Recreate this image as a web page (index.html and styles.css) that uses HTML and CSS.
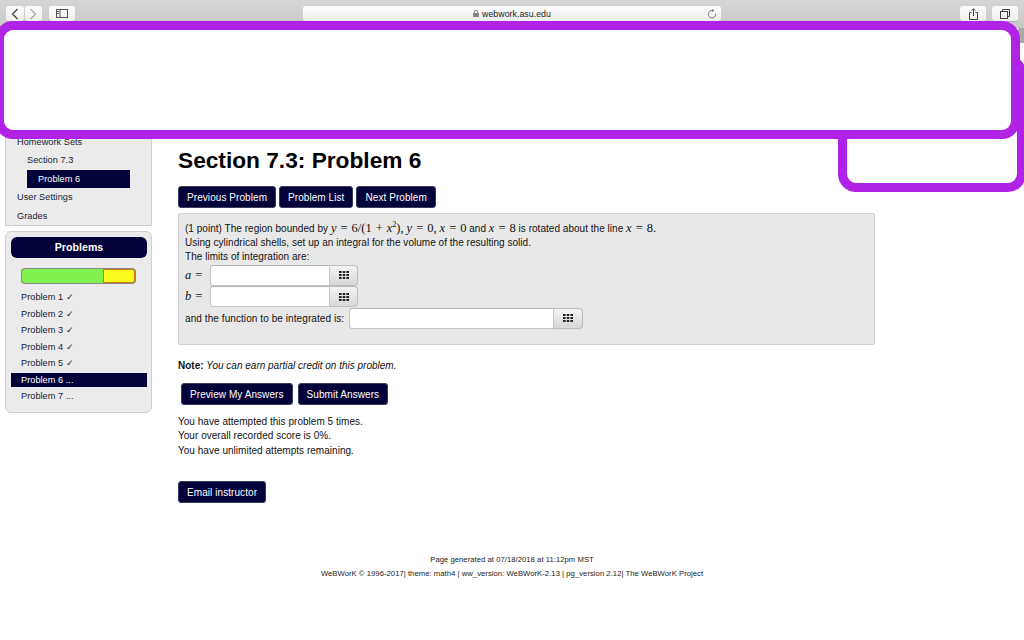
FILE: index.html
```html
<!DOCTYPE html>
<html lang="en">
<head>
<meta charset="utf-8">
<title>WeBWorK</title>
<link rel="stylesheet" href="styles.css">
</head>
<body>
<header class="toolbar">
  <div class="tool-left">
    <div class="nav-pair">
      <span class="tool-btn nav-btn"><svg width="8" height="12" viewBox="0 0 8 12"><path d="M6.500 1 1.500 6l5 5" fill="none" stroke="#444" stroke-width="1.300"/></svg></span>
      <span class="tool-btn nav-btn"><svg width="8" height="12" viewBox="0 0 8 12"><path d="M1.500 1l5 5-5 5" fill="none" stroke="#aaa" stroke-width="1.300"/></svg></span>
    </div>
    <span class="tool-btn side-btn"><svg width="12" height="10" viewBox="0 0 12 10"><rect x=".5" y=".5" width="11" height="8" fill="none" stroke="#555"/><path d="M4 .5v8M1 2.500h2M1 4.500h2" stroke="#555" fill="none"/></svg></span>
  </div>
  <div class="address">
    <svg class="lock" width="6" height="7" viewBox="0 0 6 7"><path d="M1.300 3V2a1.700 1.700 0 0 1 3.400 0v1" fill="none" stroke="#888"/><rect y="3" width="6" height="4" fill="#888"/></svg>
    <span>webwork.asu.edu</span>
    <svg class="reload" width="10" height="10" viewBox="0 0 10 10"><path d="M5.500 1.500A3.700 3.700 0 1 0 8.700 5" fill="none" stroke="#777"/><path d="M5 0l2.400 1.500L5 3z" fill="#777"/></svg>
  </div>
  <div class="tool-right">
    <span class="tool-btn right-btn"><svg width="9" height="12" viewBox="0 0 9 12"><path d="M2.500 4.500H.5v7h8v-7h-2M4.500 8V1M2.700 2.500 4.500.7l1.800 1.800" fill="none" stroke="#444"/></svg></span>
    <span class="tool-btn right-btn"><svg width="10" height="10" viewBox="0 0 10 10"><rect x=".5" y="2.500" width="7" height="7" fill="none" stroke="#444"/><path d="M2.500 2.500v-2h7v7h-2" fill="none" stroke="#444"/></svg></span>
  </div>
</header>

<div class="page">
  <aside class="sidebar">
    <nav class="panel site-nav">
      <a class="nav-top">Homework Sets</a>
      <a class="nav-sub">Section 7.3</a>
      <a class="nav-sub nav-active">Problem 6</a>
      <a class="nav-top">User Settings</a>
      <a class="nav-top">Grades</a>
    </nav>
    <nav class="panel problems">
      <h2 class="panel-title">Problems</h2>
      <div class="progress"><div class="progress-good"></div><div class="progress-part"></div></div>
      <ul class="problem-list">
        <li>Problem 1 ✓</li>
        <li>Problem 2 ✓</li>
        <li>Problem 3 ✓</li>
        <li>Problem 4 ✓</li>
        <li>Problem 5 ✓</li>
        <li class="current">Problem 6 ...</li>
        <li>Problem 7 ...</li>
      </ul>
    </nav>
  </aside>

  <main class="content">
    <h1 class="title">Section 7.3: Problem 6</h1>
    <div class="btn-row">
      <a class="btn">Previous Problem</a>
      <a class="btn">Problem List</a>
      <a class="btn">Next Problem</a>
    </div>
    <section class="problem">
      <p class="line">(1 point) The region bounded by <span class="math"><i>y</i><span class="op">=</span>6/(1<span class="op">+</span><i>x</i><sup>2</sup>),<span class="sep"></span><i>y</i><span class="op">=</span>0,<span class="sep"></span><i>x</i><span class="op">=</span>0</span> and <span class="math"><i>x</i><span class="op">=</span>8</span> is rotated about the line <span class="math"><i>x</i><span class="op">=</span>8.</span></p>
      <p class="line">Using cylindrical shells, set up an integral for the volume of the resulting solid.</p>
      <p class="line">The limits of integration are:</p>
      <div class="answer">
        <span class="math ans-label"><i>a</i><span class="op">=</span></span>
        <span class="field field-short"></span><span class="grid-btn"><svg width="10" height="8" viewBox="0 0 10 7" preserveAspectRatio="none"><path d="M0 0h2.600v1.800H0zM3.700 0h2.600v1.800H3.700zM7.400 0H10v1.800H7.400zM0 2.600h2.600v1.800H0zM3.700 2.600h2.600v1.800H3.700zM7.400 2.600H10v1.800H7.400zM0 5.200h2.600V7H0zM3.700 5.200h2.600V7H3.700zM7.400 5.200H10V7H7.400z" fill="#222"/></svg></span>
      </div>
      <div class="answer">
        <span class="math ans-label"><i>b</i><span class="op">=</span></span>
        <span class="field field-short"></span><span class="grid-btn"><svg width="10" height="8" viewBox="0 0 10 7" preserveAspectRatio="none"><path d="M0 0h2.600v1.800H0zM3.700 0h2.600v1.800H3.700zM7.400 0H10v1.800H7.400zM0 2.600h2.600v1.800H0zM3.700 2.600h2.600v1.800H3.700zM7.400 2.600H10v1.800H7.400zM0 5.200h2.600V7H0zM3.700 5.200h2.600V7H3.700zM7.400 5.200H10V7H7.400z" fill="#222"/></svg></span>
      </div>
      <div class="answer">
        <span class="fn-label">and the function to be integrated is:</span>
        <span class="field field-long"></span><span class="grid-btn grid-btn-wide"><svg width="10" height="8" viewBox="0 0 10 7" preserveAspectRatio="none"><path d="M0 0h2.600v1.800H0zM3.700 0h2.600v1.800H3.700zM7.400 0H10v1.800H7.400zM0 2.600h2.600v1.800H0zM3.700 2.600h2.600v1.800H3.700zM7.400 2.600H10v1.800H7.400zM0 5.200h2.600V7H0zM3.700 5.200h2.600V7H3.700zM7.400 5.200H10V7H7.400z" fill="#222"/></svg></span>
      </div>
    </section>
    <p class="note"><b>Note:</b> <i>You can earn partial credit on this problem.</i></p>
    <div class="btn-row submit-row">
      <a class="btn">Preview My Answers</a>
      <a class="btn">Submit Answers</a>
    </div>
    <div class="status">
      <p>You have attempted this problem 5 times.</p>
      <p>Your overall recorded score is 0%.</p>
      <p>You have unlimited attempts remaining.</p>
    </div>
    <a class="btn email">Email instructor</a>
  </main>
</div>

<footer class="footer">
  <p>Page generated at 07/18/2018 at 11:12pm MST</p>
  <p>WeBWorK © 1996-2017| theme: math4 | ww_version: WeBWorK-2.13 | pg_version 2.12| The WeBWorK Project</p>
</footer>

<div class="tab-sliver"></div>
<div class="mask mask-small"></div>
<div class="mask mask-big"></div>
</body>
</html>
```
FILE: styles.css
```css
* { box-sizing: border-box; }
html, body { margin: 0; padding: 0; }
body {
  width: 1024px;
  height: 640px;
  overflow: hidden;
  position: relative;
  background: #fff;
  color: #111;
  font-family: "Liberation Sans", Arial, sans-serif;
  font-size: 10px;
  letter-spacing: .03px;
}
p, h1, h2, ul { margin: 0; padding: 0; }
.toolbar {
  height: 28px;
  padding: 6px 6px 0 6px;
  background: linear-gradient(#d6d6d6, #c8c8c8);
  display: flex;
  align-items: flex-start;
  position: relative;
}
.tool-left { display: flex; gap: 7px; width: 297px; }
.nav-pair { display: flex; gap: 1px; }
.tool-btn {
  height: 15px;
  background: linear-gradient(#fbfbfb, #efefef);
  border-radius: 3px;
  box-shadow: 0 1px 0 #b4b4b4;
  display: flex;
  align-items: center;
  justify-content: center;
}
.nav-btn { width: 17.500px; }
.side-btn { width: 26px; }
.address {
  width: 418px;
  height: 15px;
  background: linear-gradient(#fdfdfd, #ededed);
  border-radius: 3px;
  box-shadow: 0 1px 0 #b4b4b4;
  display: flex;
  align-items: center;
  justify-content: center;
  gap: 3px;
  font-size: 8.800px;
  color: #222;
  position: relative;
}
.reload { position: absolute; right: 4px; top: 3px; }
.tool-right { display: flex; gap: 6px; margin-left: auto; }
.right-btn { width: 26px; }
.page {
  display: flex;
  align-items: flex-start;
  padding-left: 5px;
  height: 525px;
}
.sidebar { width: 147px; flex: none; margin-top: 104px; display: flex; flex-direction: column; gap: 5px; }
.panel {
  background: #ebebeb;
  border: 1px solid #d0d0d0;
}
.site-nav {
  height: 94px;
  padding: 0 21px 0 11px;
  display: flex;
  flex-direction: column;
  justify-content: flex-end;
  border-top: 0;
}
.site-nav a { display: block; height: 18.500px; line-height: 18.500px; color: #1a1a2e; font-size: 9.200px; }
.nav-sub { margin-left: 10px; }
.site-nav .nav-active { background: #03033a; color: #fff; padding-left: 11px; }
.problems {
  height: 182px;
  border-radius: 6px;
  padding: 5px 4px 0 5px;
}
.panel-title {
  height: 21px;
  line-height: 21px;
  background: #03033a;
  color: #fff;
  border-radius: 6px;
  font-size: 10.600px;
  font-weight: bold;
  text-align: center;
}
.progress {
  margin: 10px 10px 0;
  height: 16px;
  width: 115px;
  background: #8a8a8a;
  border-radius: 4px;
  padding: 1px;
  display: flex;
}
.progress-good { width: 81px; background: #7ff04d; border-radius: 3px 0 0 3px; }
.progress-part { flex: 1; background: #f8fb1c; border: 1px solid #c97a17; border-radius: 0 3px 3px 0; }
.problem-list { list-style: none; margin-top: 5px; }
.problem-list li { height: 16.500px; line-height: 16.500px; padding-left: 10px; font-size: 9.200px; color: #1a1a2e; }
.problem-list li.current { background: #03033a; color: #fff; height: 14px; line-height: 14px; margin: 1.500px 0 1px; }
.content { margin-left: 26px; width: 697px; flex: none; padding-top: 118px; }
.title { font-size: 22.700px; line-height: 28px; font-weight: bold; color: #000; letter-spacing: 0; }
.btn-row { display: flex; gap: 3px; margin-top: 12px; }
.btn {
  display: inline-block;
  height: 22px;
  line-height: 21px;
  padding: 0 8px;
  background: #03033a;
  color: #fff;
  border-radius: 3px;
  border: 1px solid #3a3a60;
  font-size: 10px;
  letter-spacing: .07px;
}
.problem {
  margin-top: 5px;
  height: 132px;
  background: #e8e8e8;
  border: 1px solid #d0d0d0;
  border-radius: 2px;
  padding: 7px 6px 0;
}
.line { height: 14.500px; line-height: 14.500px; white-space: nowrap; }
.math { font-family: "Liberation Serif", "Times New Roman", serif; font-size: 12.500px; letter-spacing: 0; }
.op { margin: 0 4px; }
.sep { display: inline-block; width: 3px; }
.math sup { font-size: 8px; line-height: 0; }
.answer { display: flex; align-items: center; height: 21.500px; }
.ans-label { width: 25px; flex: none; }
.fn-label { margin-right: 5px; letter-spacing: .08px; }
.field {
  height: 21px;
  background: #fff;
  border: 1px solid #c4c4c4;
  border-top-color: #b4b4b4;
  border-radius: 3px 0 0 3px;
}
.field-short { width: 120px; }
.field-long { width: 205px; }
.grid-btn {
  width: 28px;
  height: 21px;
  background: linear-gradient(#f4f4f4, #d8d8d8);
  border: 1px solid #bdbdbd;
  border-left: 0;
  border-radius: 0 4px 4px 0;
  display: flex;
  align-items: center;
  justify-content: center;
}
.grid-btn-wide { width: 29px; }
.note { margin-top: 14px; line-height: 14px; letter-spacing: 0; }
.submit-row { margin-top: 10px; margin-left: 3px; gap: 5px; }
.status { margin-top: 10px; }
.status p { height: 14.300px; line-height: 14.300px; }
.email { margin-top: 23px; }
.footer { text-align: center; font-size: 7.700px; color: #222; }
.footer p { height: 14px; line-height: 14px; }
.tab-sliver { position: absolute; left: 1018px; top: 28px; width: 6px; height: 15px; background: #a8a8a8; }
.mask { position: absolute; border: 9px solid #b023e6; background: #fff; border-radius: 18px; }
.mask-big { left: -5px; top: 21px; width: 1025px; height: 118px; }
.mask-small { left: 838px; top: 55px; width: 188px; height: 137px; }
```
